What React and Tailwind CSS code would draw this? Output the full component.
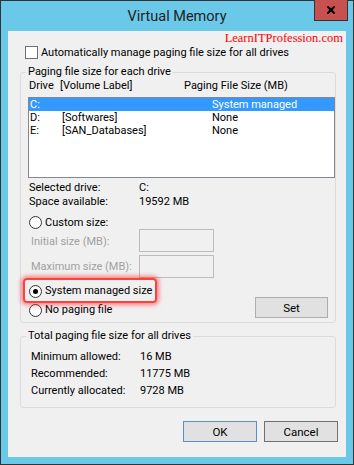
import { X } from 'lucide-react'

const drives = [
  { drive: 'C:', label: '', size: 'System managed', selected: true },
  { drive: 'D:', label: '[Softwares]', size: 'None' },
  { drive: 'E:', label: '[SAN_Databases]', size: 'None' },
]

const totals = [
  { label: 'Minimum allowed:', value: '16 MB' },
  { label: 'Recommended:', value: '11775 MB' },
  { label: 'Currently allocated:', value: '9728 MB' },
]

function Radio({ checked }) {
  return (
    <span className="w-[13px] h-[13px] rounded-full border border-[#333] bg-white flex items-center justify-center shrink-0">
      {checked && <span className="w-[5px] h-[5px] rounded-full bg-black" />}
    </span>
  )
}

function Button({ children, primary }) {
  return (
    <div
      className={`h-[21px] w-[74px] bg-[#e1e1e1] border flex items-center justify-center text-[11.5px] text-black ${
        primary ? 'border-[#5b8fc3]' : 'border-[#707070]'
      }`}
    >
      {children}
    </div>
  )
}

export default function App() {
  return (
    <div className="relative w-[354px] h-[465px] bg-[#333] p-px font-['Roboto',sans-serif] text-[#000] whitespace-nowrap">
      <div className="h-full bg-[#6ac9e9] flex flex-col">
        {/* Title bar */}
        <div className="h-[30px] flex items-center justify-center text-[14.5px] text-[#1e1e1e] pt-[1px]">
          Virtual Memory
        </div>

        {/* Client area */}
        <div className="relative mx-[7px] h-[426px] bg-[#f0f0f0] text-[11px] leading-[14px]">
          <div className="absolute right-[3px] top-[1px] text-[12.5px] leading-[13px] text-[#ff0000] font-['Liberation_Serif',serif]">
            LearnITProfession.com
          </div>

          <div className="flex items-center gap-[3px] pl-[17px] pt-[15px] h-[28px]">
            <span className="w-[13px] h-[13px] border border-[#707070] bg-white shrink-0" />
            <span>Automatically manage paging file size for all drives</span>
          </div>

          {/* Paging file size for each drive */}
          <fieldset className="ml-[12px] mt-[6px] w-[316px] border border-[#dcdcdc] rounded-[3px] pb-[5px]">
            <legend className="ml-[5px] px-[2px] leading-[14px]">Paging file size for each drive</legend>
            <div className="h-[14px] flex pl-[8px]">
              <span className="w-[31px]">Drive</span>
              <span className="w-[124px]">[Volume Label]</span>
              <span>Paging File Size (MB)</span>
            </div>
            <div className="ml-[7px] mt-[4px] h-[81px] border border-[#828790] bg-white">
              {drives.map(d => (
                <div
                  key={d.drive}
                  className={`h-[13px] flex items-center pl-[1px] leading-[13px] ${
                    d.selected ? 'bg-[#3399ff] text-white' : ''
                  }`}
                >
                  <span className="w-[32px]">{d.drive}</span>
                  <span className="w-[150px]">{d.label}</span>
                  <span>{d.size}</span>
                </div>
              ))}
            </div>
            <div className="mt-[3px] pl-[8px]">
              <div className="h-[14px] flex">
                <span className="w-[110px]">Selected drive:</span>
                <span>C:</span>
              </div>
              <div className="h-[14px] flex">
                <span className="w-[110px]">Space available:</span>
                <span>19592 MB</span>
              </div>
            </div>
            <div className="mt-[7px] h-[13px] pl-[8px] flex items-center gap-[3px]">
              <Radio />
              <span>Custom size:</span>
            </div>
            <div className="h-[23px] flex items-center text-[#a0a0a0]">
              <span className="w-[118px] pl-[10px] pt-[2px]">Initial size (MB):</span>
              <span className="w-[75px] h-full border border-[#bcbcbc]" />
            </div>
            <div className="mt-[3px] h-[23px] flex items-center text-[#a0a0a0]">
              <span className="w-[118px] pl-[10px] pt-[1px]">Maximum size (MB):</span>
              <span className="w-[75px] h-full border border-[#bcbcbc]" />
            </div>
            <div className="flex items-end justify-between pr-[7px]">
              <div className="pl-[8px]">
                <div className="relative mt-[6px] h-[14px] flex items-center gap-[3px]">
                  <span className="absolute left-[-6px] top-[-6px] w-[134px] h-[25px] rounded-[4px] border-2 border-[#ff4040] shadow-[0_0_4px_2px_rgba(255,40,40,0.55)]" />
                  <Radio checked />
                  <span>System managed size</span>
                </div>
                <div className="mt-[5px] h-[14px] flex items-center gap-[3px]">
                  <Radio />
                  <span>No paging file</span>
                </div>
              </div>
              <div className="mb-[-1px] h-[21px] w-[73px] bg-[#e1e1e1] border border-[#adadad] flex items-center justify-center text-[11.5px]">
                Set
              </div>
            </div>
          </fieldset>

          {/* Total paging file size */}
          <fieldset className="ml-[12px] mt-[6px] w-[316px] border border-[#dcdcdc] rounded-[3px] pb-[8px]">
            <legend className="ml-[5px] px-[2px] leading-[14px]">Total paging file size for all drives</legend>
            <div className="mt-[5px] pl-[10px]">
              {totals.map(t => (
                <div key={t.label} className="h-[17px] flex items-center">
                  <span className="w-[109px]">{t.label}</span>
                  <span>{t.value}</span>
                </div>
              ))}
            </div>
          </fieldset>

          <div className="mt-[13px] flex justify-end gap-[7px] pr-[8px]">
            <Button primary>OK</Button>
            <Button>Cancel</Button>
          </div>
        </div>
      </div>

      {/* Close button */}
      <div className="absolute left-[314px] top-0 w-[34px] h-[21px] bg-[#c75050] border border-t-0 border-[#333] flex items-center justify-center">
        <X size={12} strokeWidth={4} className="text-black" />
      </div>
    </div>
  )
}
